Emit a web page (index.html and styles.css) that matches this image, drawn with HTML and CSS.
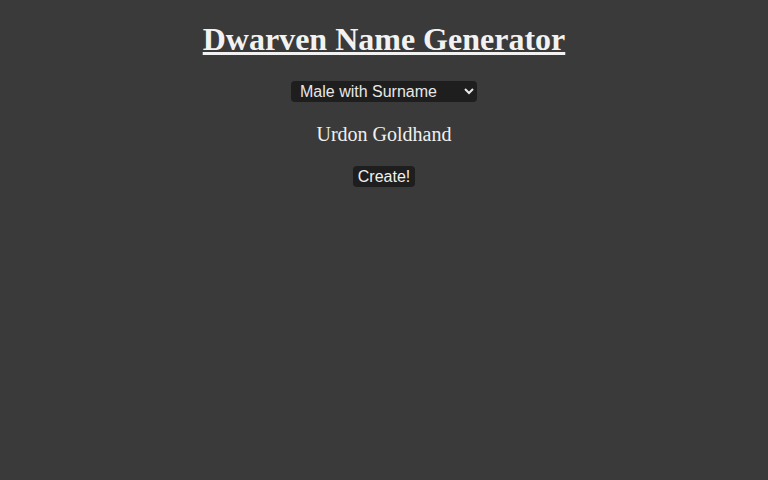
FILE: index.html
```html
<!DOCTYPE html>
<html lang="en">

<head>
    <meta charset="UTF-8">
    <meta name="viewport" content="width=device-width, initial-scale=1.0">
    <title>Dwarven Name Generator</title>

    <link rel="stylesheet" href="styles.css">
</head>

<body>

    <div class="container">
        <h1 class="title">Dwarven Name Generator</h1>

        <!-- Name Type Selection -->
        <div class="type-row">
            <select id="nameType" class="type-select">
                <option value="male-surname" selected>Male with Surname</option>
                <option value="male">Male</option>
                <option value="female-surname">Female with Surname</option>
                <option value="female">Female</option>
            </select>
        </div>

        <!-- Generated Name -->
        <p id="result" class="result">Urdon Goldhand</p>

        <button type="button" id="createBtn" class="create-btn">Create!</button>
    </div>

</body>

</html>
```

FILE: styles.css
```css
/* General Styles */
body {
    font-family: 'Liberation Serif', 'Times New Roman', serif;
    background: #3a3a3a;
    color: #f2f2f2;
    margin: 0;
    padding: 8px;
}

/* Centering Container */
.container {
    display: flex;
    flex-direction: column;
    align-items: center;
}

/* Title */
.title {
    font-size: 32px;
    font-weight: bold;
    text-decoration: underline;
    margin: 13px 0 23px;
}

/* Name Type Dropdown */
.type-row {
    display: flex;
    justify-content: center;
}

.type-select {
    width: 186px;
    height: 21px;
    padding: 0 5px;
    font-family: 'Liberation Sans', Arial, sans-serif;
    font-size: 16px;
    color: #e8e8e8;
    background: #1e1e1e;
    border: none;
    border-radius: 4px;
    color-scheme: dark;
}

/* Generated Name */
.result {
    font-size: 20px;
    margin: 21px 0 20px;
    color: #f0f0f0;
}

/* Create Button */
.create-btn {
    height: 21px;
    padding: 0 5px;
    font-family: 'Liberation Sans', Arial, sans-serif;
    font-size: 16px;
    color: #f0f0f0;
    background: #1e1e1e;
    border: none;
    border-radius: 4px;
    cursor: pointer;
}
```
